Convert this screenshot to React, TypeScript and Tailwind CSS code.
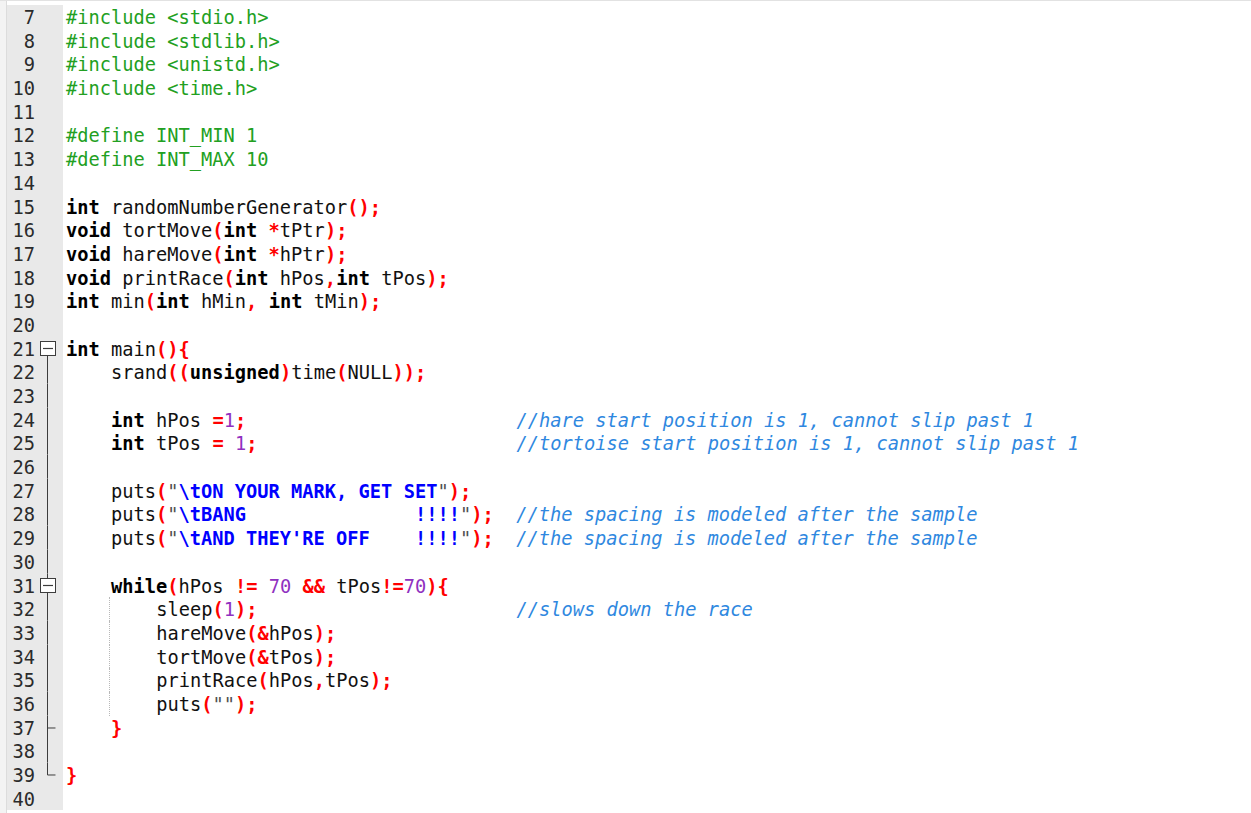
import React from "react";

const LINES: string[] = [
  "#include <stdio.h>",
  "#include <stdlib.h>",
  "#include <unistd.h>",
  "#include <time.h>",
  "",
  "#define INT_MIN 1",
  "#define INT_MAX 10",
  "",
  "int randomNumberGenerator();",
  "void tortMove(int *tPtr);",
  "void hareMove(int *hPtr);",
  "void printRace(int hPos,int tPos);",
  "int min(int hMin, int tMin);",
  "",
  "int main(){",
  "    srand((unsigned)time(NULL));",
  "",
  "    int hPos =1;                        //hare start position is 1, cannot slip past 1",
  "    int tPos = 1;                       //tortoise start position is 1, cannot slip past 1",
  "",
  '    puts("\\tON YOUR MARK, GET SET");',
  '    puts("\\tBANG               !!!!");  //the spacing is modeled after the sample',
  '    puts("\\tAND THEY\'RE OFF    !!!!");  //the spacing is modeled after the sample',
  "",
  "    while(hPos != 70 && tPos!=70){",
  "        sleep(1);                       //slows down the race",
  "        hareMove(&hPos);",
  "        tortMove(&tPos);",
  "        printRace(hPos,tPos);",
  '        puts("");',
  "    }",
  "",
  "}",
  "",
];

const KEYWORDS = new Set(["int", "void", "unsigned", "while"]);
const OPS = "(){};,*=!&<>+-";

type Tok = { t: string; c: string };

const C_PP = "text-[#22a022]";
const C_KW = "font-bold text-[#000000]";
const C_ID = "text-[#111111]";
const C_OP = "font-bold text-[#ff0000]";
const C_NUM = "text-[#9030c0]";
const C_QUOTE = "text-[#505050]";
const C_STR = "font-bold text-[#0000ff]";
const C_CMT = "italic text-[#2f88e0]";

function tokenize(line: string): Tok[] {
  if (line.trim().startsWith("#")) return [{ t: line, c: C_PP }];
  const out: Tok[] = [];
  let i = 0;
  while (i < line.length) {
    const ch = line[i];
    if (ch === "/" && line[i + 1] === "/") {
      out.push({ t: line.slice(i), c: C_CMT });
      break;
    }
    if (ch === '"') {
      const end = line.indexOf('"', i + 1);
      out.push({ t: '"', c: C_QUOTE });
      const inner = line.slice(i + 1, end);
      if (inner.length) out.push({ t: inner, c: C_STR });
      out.push({ t: '"', c: C_QUOTE });
      i = end + 1;
      continue;
    }
    if (/[A-Za-z_]/.test(ch)) {
      let j = i;
      while (j < line.length && /[A-Za-z0-9_]/.test(line[j])) j++;
      const w = line.slice(i, j);
      out.push({ t: w, c: KEYWORDS.has(w) ? C_KW : C_ID });
      i = j;
      continue;
    }
    if (/[0-9]/.test(ch)) {
      let j = i;
      while (j < line.length && /[0-9]/.test(line[j])) j++;
      out.push({ t: line.slice(i, j), c: C_NUM });
      i = j;
      continue;
    }
    if (OPS.includes(ch)) {
      out.push({ t: ch, c: C_OP });
      i++;
      continue;
    }
    out.push({ t: ch, c: C_ID });
    i++;
  }
  return out;
}

type Fold = "none" | "open" | "openmid" | "mid" | "tick" | "end";

function foldFor(n: number): Fold {
  if (n === 21) return "open";
  if (n === 31) return "openmid";
  if (n === 37) return "tick";
  if (n === 39) return "end";
  if (n > 21 && n < 39) return "mid";
  return "none";
}

function FoldMark({ kind }: { kind: Fold }) {
  if (kind === "none") return null;
  const x = 11.5;
  const h = 23.7;
  const cy = 12;
  const stroke = "#3c3c3c";
  return (
    <svg width="27" height={h} viewBox={`0 0 27 ${h}`} className="block">
      {(kind === "mid" || kind === "tick" || kind === "openmid") && (
        <line x1={x} y1={0} x2={x} y2={h} stroke={stroke} strokeWidth="1" />
      )}
      {kind === "open" && (
        <line x1={x} y1={cy} x2={x} y2={h} stroke={stroke} strokeWidth="1" />
      )}
      {(kind === "open" || kind === "openmid") && (
        <>
          <rect x={4.5} y={4.5} width={15} height={14} fill="#ffffff" stroke={stroke} strokeWidth="1" />
          <line x1={7} y1={11.5} x2={17} y2={11.5} stroke={stroke} strokeWidth="1.2" />
        </>
      )}
      {kind === "tick" && (
        <line x1={x} y1={cy} x2={x + 8} y2={cy} stroke={stroke} strokeWidth="1" />
      )}
      {kind === "end" && (
        <>
          <line x1={x} y1={0} x2={x} y2={cy} stroke={stroke} strokeWidth="1" />
          <line x1={x} y1={cy} x2={x + 8} y2={cy} stroke={stroke} strokeWidth="1" />
        </>
      )}
    </svg>
  );
}

export default function App() {
  return (
    <div
      className="w-[1251px] h-[813px] bg-white flex border-t border-[#e2e2e2] overflow-hidden"
      style={{ fontFamily: '"DejaVu Sans Mono", "Liberation Mono", monospace' }}
    >
      <div className="w-[7px] shrink-0 bg-[#f3f3f3] border-r border-[#dcdcdc]" />
      <div className="flex-1 pt-[4px]">
        {LINES.map((line, idx) => {
          const n = idx + 7;
          const guide = n >= 32 && n <= 36;
          return (
            <div key={n} className="flex h-[23.7px] text-[18.7px] leading-[25px]">
              <div className="w-[29px] shrink-0 bg-[#e9e9e9] text-right text-[#2b2b2b] pr-[1px]">
                {n}
              </div>
              <div className="w-[27px] shrink-0 bg-[#e9e9e9]">
                <FoldMark kind={foldFor(n)} />
              </div>
              <div className="relative flex-1 pl-[3px] whitespace-pre">
                {guide && (
                  <span className="absolute left-[46px] top-0 bottom-0 border-l border-dotted border-[#b8b8b8]" />
                )}
                {tokenize(line).map((tk, k) => (
                  <span key={k} className={tk.c}>
                    {tk.t}
                  </span>
                ))}
              </div>
            </div>
          );
        })}
      </div>
    </div>
  );
}
